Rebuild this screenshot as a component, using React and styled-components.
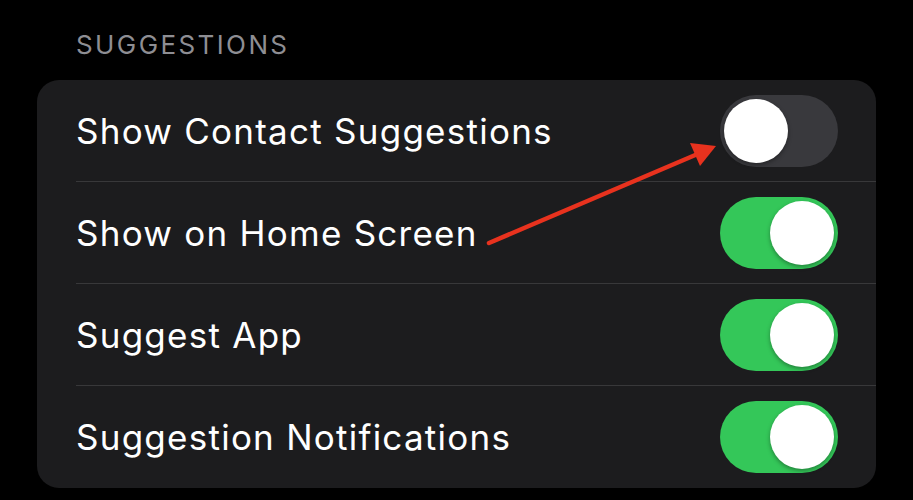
import React from "react";
import styled, { createGlobalStyle } from "styled-components";

const Global = createGlobalStyle`
  html, body { margin: 0; padding: 0; background: #000; }
  body { font-family: Inter, "Noto Sans", "Liberation Sans", sans-serif; -webkit-font-smoothing: antialiased; }
`;

const Page = styled.div`
  position: relative;
  width: 913px;
  height: 500px;
  overflow: hidden;
  background: #000;
  padding-top: 28px;
  box-sizing: border-box;
`;

const Header = styled.div`
  padding-left: 76px;
  color: #8e8e93;
  font-size: 26px;
  line-height: 34px;
  letter-spacing: 2.4px;
  margin-bottom: 18px;
`;

const Card = styled.div`
  margin-left: 37px;
  width: 839px;
  background: #1c1c1e;
  border-radius: 22px;
  overflow: hidden;
`;

const Row = styled.div`
  display: flex;
  align-items: center;
  justify-content: space-between;
  height: 102px;
  margin-left: 39px;
  padding-right: 38px;
  box-sizing: border-box;
  border-bottom: ${(p) => (p.$last ? "none" : "1.5px solid #38383a")};
`;

const Label = styled.span`
  color: #fff;
  font-size: 35px;
  letter-spacing: 1.25px;
`;

const Track = styled.div`
  position: relative;
  width: 118px;
  height: 72px;
  border-radius: 36px;
  background: ${(p) => (p.$on ? "#34c759" : "#39393d")};
  flex-shrink: 0;
`;

const Knob = styled.div`
  position: absolute;
  top: 4px;
  left: ${(p) => (p.$on ? "50px" : "4px")};
  width: 64px;
  height: 64px;
  border-radius: 50%;
  background: #fff;
  box-shadow: 0 2px 4px rgba(0, 0, 0, 0.35);
`;

const Arrow = styled.svg`
  position: absolute;
  left: 0;
  top: 0;
  pointer-events: none;
`;

const Toggle = ({ on }) => (
  <Track $on={on}>
    <Knob $on={on} />
  </Track>
);

const rows = [
  { label: "Show Contact Suggestions", on: false },
  { label: "Show on Home Screen", on: true },
  { label: "Suggest App", on: true },
  { label: "Suggestion Notifications", on: true },
];

export default function App() {
  return (
    <>
      <Global />
      <Page>
        <Header>SUGGESTIONS</Header>
        <Card>
          {rows.map((r, i) => (
            <Row key={r.label} $last={i === rows.length - 1}>
              <Label>{r.label}</Label>
              <Toggle on={r.on} />
            </Row>
          ))}
        </Card>
        <Arrow width="913" height="500" viewBox="0 0 913 500">
          <line x1="489" y1="243" x2="700" y2="153" stroke="#e8321e" strokeWidth="4.5" strokeLinecap="round" />
          <polygon points="716,146 690,143 700,166" fill="#e8321e" />
        </Arrow>
      </Page>
    </>
  );
}
